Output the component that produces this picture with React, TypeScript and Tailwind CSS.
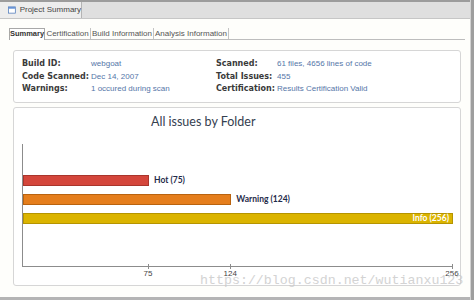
import React from "react";

const bars = [
  { label: "Hot (75)", value: 75, color: "#d4463b", border: "#a9352c", inside: false },
  { label: "Warning (124)", value: 124, color: "#e57e1c", border: "#b9630f", inside: false },
  { label: "Info (256)", value: 256, color: "#dbb400", border: "#b59400", inside: true },
];
const MAX = 256;
const PW = 430;

const info = [
  ["Build ID:", "webgoat", "Scanned:", "61 files, 4656 lines of code"],
  ["Code Scanned:", "Dec 14, 2007", "Total Issues:", "455"],
  ["Warnings:", "1 occured during scan", "Certification:", "Results Certification Valid"],
];

function WindowIcon() {
  return (
    <svg width="11" height="10" viewBox="0 0 11 10">
      <rect x="0.5" y="0.5" width="10" height="9" fill="#ffffff" stroke="#3f6fb6" />
      <rect x="1" y="1" width="9" height="2" fill="#4a7fd0" />
    </svg>
  );
}

function Label({ children }: { children: React.ReactNode }) {
  return (
    <span className="text-[8px] font-bold text-[#3a3a3a] whitespace-nowrap font-['DejaVu_Sans',Verdana,sans-serif]">
      {children}
    </span>
  );
}

function Value({ children }: { children: React.ReactNode }) {
  return (
    <span className="text-[8px] text-[#5576a8] whitespace-nowrap font-['Liberation_Sans',Arial,sans-serif]">
      {children}
    </span>
  );
}

export default function App() {
  return (
    <div className="w-[474px] h-[300px] flex overflow-hidden relative bg-white font-['Liberation_Sans',Arial,sans-serif]">
      <div className="w-[470px] flex flex-col">
        <div className="h-[2px] bg-[#9c9c9c]" />
        <div className="h-[17px] bg-[#dfdfdf] border-b border-[#c6c6c6] flex">
          <div className="w-[82px] bg-[#ededed] border-r border-[#b4b4b4] flex items-center pl-[8px] gap-[4px]">
            <WindowIcon />
            <span className="text-[8px] text-[#444] leading-none whitespace-nowrap">Project Summary</span>
          </div>
        </div>
        <div className="h-[278px] bg-[#fefefb] pl-[9px] pr-[5px] pt-[9px] flex flex-col">
          <div className="h-[12px] border-b border-[#bdbdbd] flex items-end">
            <div className="h-[12px] w-[36px] border border-b-0 border-[#a8a8a8] bg-white flex items-center justify-center text-[7.5px] font-bold text-[#333] -mb-px pb-px whitespace-nowrap">
              Summary
            </div>
            <div className="h-[11px] w-[46px] border-r border-[#c4c4c4] flex items-center justify-center text-[8px] text-[#555] whitespace-nowrap">
              Certification
            </div>
            <div className="h-[11px] w-[63px] border-r border-[#c4c4c4] flex items-center justify-center text-[8px] text-[#555] whitespace-nowrap">
              Build Information
            </div>
            <div className="h-[11px] w-[75px] border-r border-[#c4c4c4] flex items-center justify-center text-[8px] text-[#555] whitespace-nowrap">
              Analysis Information
            </div>
          </div>
          <div className="px-[4px] pt-[10px] flex flex-col gap-[4px]">
            <div className="h-[53px] border border-[#d6d6d6] rounded-[3px] bg-white pl-[8px] pt-[7px]">
              <div className="grid grid-cols-[69px_125px_61px_1fr] auto-rows-[12.5px] items-center">
                {info.map((row) => (
                  <React.Fragment key={row[0]}>
                    <Label>{row[0]}</Label>
                    <Value>{row[1]}</Value>
                    <Label>{row[2]}</Label>
                    <Value>{row[3]}</Value>
                  </React.Fragment>
                ))}
              </div>
            </div>
            <div className="h-[179px] border border-[#d6d6d6] rounded-[3px] bg-white pl-[8px] pt-[6px]">
              <div className="h-[15px] pl-[129px] text-[12.5px] leading-[15px] text-[#34404f] font-['Lato','Open_Sans',sans-serif]">
                All issues by Folder
              </div>
              <div className="mt-[15px] relative w-[431px] h-[123px] border-l border-b border-[#8c8c8c]">
                <div className="pt-[31px] flex flex-col gap-[8px]">
                  {bars.map((b) => (
                    <div key={b.label} className="flex items-center h-[11px]">
                      <div
                        className="h-[11px] border flex items-center justify-end pr-[3px]"
                        style={{ width: (b.value / MAX) * PW, backgroundColor: b.color, borderColor: b.border }}
                      >
                        {b.inside && (
                          <span className="text-[8.5px] font-bold text-white leading-none font-['Lato',sans-serif]">
                            {b.label}
                          </span>
                        )}
                      </div>
                      {!b.inside && (
                        <span className="ml-[5px] text-[8.5px] font-bold text-[#1f2b4a] leading-none font-['Lato',sans-serif]">
                          {b.label}
                        </span>
                      )}
                    </div>
                  ))}
                </div>
                {[75, 124, 256].map((t) => (
                  <div key={t} className="absolute bottom-[-3px] w-0" style={{ left: (t / MAX) * PW - 1 }}>
                    <div className="w-px h-[5px] bg-[#8c8c8c]" />
                    <div className="absolute top-[6px] left-0 -translate-x-1/2 text-[8px] text-[#444] leading-none">
                      {t}
                    </div>
                  </div>
                ))}
              </div>
            </div>
          </div>
        </div>
        <div className="h-[3px] bg-[#b4b4b4]" />
      </div>
      <div className="w-[4px] bg-[#9e9e9e] border-l border-[#d2d2d2]" />
      <div className="absolute left-[200px] top-[274px] text-[13.3px] leading-none text-[#c9c9c9] opacity-80 pointer-events-none font-['Liberation_Mono','Courier_New',monospace]">
        https://blog.csdn.net/wutianxu123
      </div>
    </div>
  );
}
